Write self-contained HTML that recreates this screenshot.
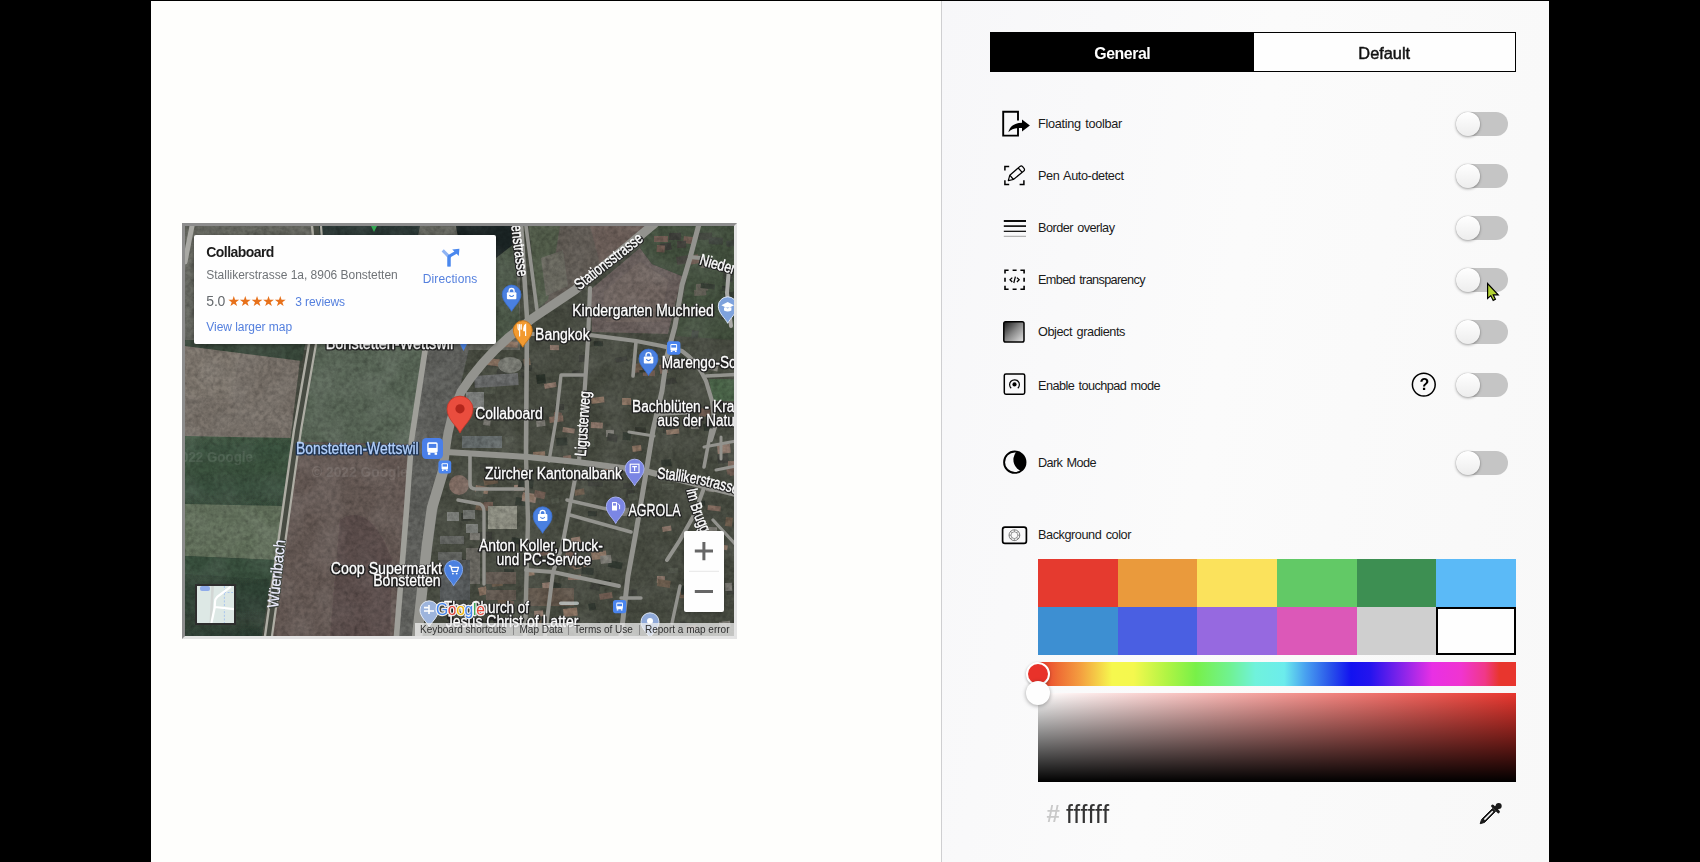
<!DOCTYPE html>
<html lang="en">
<head>
<meta charset="utf-8">
<title>Collaboard settings</title>
<style>
*{box-sizing:border-box;margin:0;padding:0}
html,body{width:1700px;height:862px;overflow:hidden;background:#000;font-family:"Liberation Sans",sans-serif;}
#stage{position:absolute;left:0;top:0;width:1700px;height:862px;background:#000;overflow:hidden}
#canvas{position:absolute;left:151px;top:1px;width:790px;height:861px;background:#fefefc}
#divider{position:absolute;left:941px;top:1px;width:1px;height:861px;background:#cfcfd1}
#panel{position:absolute;left:942px;top:1px;width:607px;height:861px;background:linear-gradient(100deg,#f7f7f9 0%,#fbfbfb 45%,#f8f8f8 100%)}
.abs{position:absolute}
/* tabs */
#tabG{left:990px;top:32px;width:264px;height:40px;background:#000;color:#fff}
#tabD{left:1253px;top:32px;width:263px;height:40px;background:#fefefe;border:1px solid #000;color:#111}
.tab{position:absolute;font-size:17.2px;font-weight:bold;text-align:center;line-height:42px;letter-spacing:-0.5px}
.tab span{display:inline-block;transform:scaleX(.925);transform-origin:50% 50%}
#tabD.tab{line-height:40px;letter-spacing:0;font-weight:normal;-webkit-text-stroke:0.5px #151515}
#tabD.tab span{transform:scaleX(.95)}
/* rows */
.lbl{position:absolute;left:1038px;font-size:12.7px;color:#1a1a1a;white-space:nowrap;word-spacing:1.3px;line-height:16px;height:16px}
.tg{position:absolute;left:1456px;width:52px;height:24px;border-radius:12px;background:#c5c5c5}
.tg i{position:absolute;left:0;top:0;width:24px;height:24px;border-radius:50%;background:linear-gradient(180deg,#ffffff,#ededed);box-shadow:0 1px 3px rgba(0,0,0,.35),0 0 1px rgba(0,0,0,.25)}
.ic{position:absolute;overflow:visible}
.mt{white-space:nowrap}
/* swatches */
.sw{position:absolute;height:48px}
</style>
</head>
<body>
<div id="stage">
<div id="canvas"></div>
<div id="divider"></div>
<div id="panel"></div>

<!-- MAP-START -->
<div id="mapframe" class="abs" style="left:182px;top:223px;width:555px;height:416px;border:3px solid;border-color:#8d8d8d #e4e4e4 #e4e4e4 #8d8d8d;background:#484e43;overflow:hidden">
<svg class="abs" style="left:0;top:0" width="549" height="410" viewBox="185 226 549 410" font-family="Liberation Sans, sans-serif">
<defs>
<filter id="nz" x="0" y="0" width="100%" height="100%"><feTurbulence type="fractalNoise" baseFrequency="0.22" numOctaves="3" seed="4" result="t"/><feColorMatrix type="matrix" values="0 0 0 0 0  0 0 0 0 0  0 0 0 0 0  0.9 0.9 0 0 -0.62"/></filter>
<filter id="nz2" x="0" y="0" width="100%" height="100%"><feTurbulence type="fractalNoise" baseFrequency="0.035" numOctaves="2" seed="11"/><feColorMatrix type="matrix" values="0 0 0 0 1  0 0 0 0 1  0 0 0 0 1  0.8 0.6 0 0 -0.55"/></filter>
<filter id="bl"><feGaussianBlur stdDeviation="0.7"/></filter>

<filter id="bl2"><feGaussianBlur stdDeviation="2.2"/></filter>
<linearGradient id="gf" x1="0" y1="0" x2="0" y2="1"><stop offset="0" stop-color="#3f5843"/><stop offset="1" stop-color="#2f4135"/></linearGradient>
<clipPath id="mc"><rect x="185" y="226" width="549" height="410"/></clipPath>
</defs>
<g clip-path="url(#mc)">
<g filter="url(#bl)">
<rect x="185" y="226" width="549" height="410" fill="#484e43"/>
<path d="M185 226H520V350H185Z" fill="#686a62"/>
<path d="M316 226H420L418 236H314Z" fill="#2c3934"/>
<path d="M185 346L300 360L290 442L185 438Z" fill="#7d756d"/>
<path d="M185 346L240 352L232 400L185 396Z" fill="#877f76" opacity=".7"/>
<path d="M185 340H306L302 361L185 346Z" fill="#3b4c3d"/>
<path d="M185 436L292 438L262 636H185Z" fill="url(#gf)"/>
<path d="M185 504L283 506L275 560L185 556Z" fill="#66755f"/>
<path d="M185 556L275 560L272 580L185 574Z" fill="#3b5240"/>
<path d="M312 344L424 344L412 444L298 442Z" fill="#5c6a5a"/>
<path d="M298 442L412 444L394 636L270 636Z" fill="#6b5d59"/>
<path d="M340 520Q370 500 392 560L390 636H330Z" fill="#5f4f4e" opacity=".8"/>
<path d="M300 444L412 446L411 452L299 450Z" fill="#56634f"/>
<path d="M424 344L470 344L448 440L436 520L420 636L394 636L412 444Z" fill="#62635e"/>
<path d="M456 226H512L514 244Q508 262 496 258Q482 262 470 250Q458 246 456 226Z" fill="#1f2725"/>
<path d="M496 258L514 244L520 320L498 344H496Z" fill="#4e5a4a"/>
<path d="M538 226H648L574 286L545 306Z" fill="#655f58"/>
<path d="M590 226H648L600 264Z" fill="#6f625c"/>
<path d="M529 226H560L548 300L538 308Z" fill="#55604e"/>
<path d="M541 258L563 250L568 286L546 296Z" fill="#6e6d64"/>
<path d="M590 290L640 248L652 264L682 276L668 334L592 332Z" fill="#6d625e"/>
<path d="M604 292L640 262L668 280L660 322L606 322Z" fill="#766a65"/>
<path d="M652 226H700L682 276L652 264L640 248Z" fill="#445241"/>
<path d="M700 226H734V340L676 336L690 262Z" fill="#455340"/>
<path d="M709 379H736V401H713Z" fill="#4c6648"/>
</g>
<g filter="url(#bl)" opacity=".85">
<rect x="544" y="384" width="12" height="5" fill="#a08476" transform="rotate(-10 544 384)"/>
<rect x="615" y="604" width="9" height="5" fill="#2f352e" transform="rotate(-10 615 604)"/>
<rect x="480" y="463" width="14" height="5" fill="#3a3e37" transform="rotate(3 480 463)"/>
<rect x="615" y="358" width="12" height="5" fill="#3a3e37" transform="rotate(-11 615 358)"/>
<rect x="691" y="424" width="8" height="5" fill="#8d8a84" transform="rotate(1 691 424)"/>
<rect x="643" y="370" width="12" height="6" fill="#7c6458" transform="rotate(1 643 370)"/>
<rect x="512" y="537" width="10" height="6" fill="#2c322b" transform="rotate(10 512 537)"/>
<rect x="554" y="412" width="8" height="8" fill="#7c6458" transform="rotate(2 554 412)"/>
<rect x="599" y="594" width="13" height="6" fill="#7c6458" transform="rotate(-9 599 594)"/>
<rect x="570" y="560" width="8" height="7" fill="#8f7265" transform="rotate(11 570 560)"/>
<rect x="476" y="502" width="13" height="8" fill="#74604f" transform="rotate(5 476 502)"/>
<rect x="618" y="508" width="11" height="8" fill="#8d8a84" transform="rotate(-1 618 508)"/>
<rect x="638" y="358" width="13" height="8" fill="#555a50" transform="rotate(8 638 358)"/>
<rect x="533" y="452" width="12" height="5" fill="#9a7b6b" transform="rotate(-3 533 452)"/>
<rect x="623" y="483" width="9" height="6" fill="#3a3e37" transform="rotate(-2 623 483)"/>
<rect x="707" y="484" width="8" height="7" fill="#8d8a84" transform="rotate(9 707 484)"/>
<rect x="680" y="591" width="9" height="7" fill="#74604f" transform="rotate(4 680 591)"/>
<rect x="560" y="407" width="8" height="6" fill="#555a50" transform="rotate(-6 560 407)"/>
<rect x="588" y="511" width="9" height="5" fill="#2f352e" transform="rotate(1 588 511)"/>
<rect x="623" y="432" width="8" height="8" fill="#2c322b" transform="rotate(4 623 432)"/>
<rect x="658" y="472" width="14" height="9" fill="#555a50" transform="rotate(7 658 472)"/>
<rect x="563" y="456" width="8" height="8" fill="#8f7265" transform="rotate(-7 563 456)"/>
<rect x="726" y="468" width="8" height="7" fill="#7c6458" transform="rotate(-12 726 468)"/>
<rect x="497" y="369" width="10" height="5" fill="#3a3e37" transform="rotate(3 497 369)"/>
<rect x="496" y="413" width="10" height="6" fill="#7c6458" transform="rotate(-9 496 413)"/>
<rect x="589" y="624" width="11" height="6" fill="#31362f" transform="rotate(-10 589 624)"/>
<rect x="549" y="417" width="14" height="6" fill="#8f7265" transform="rotate(-7 549 417)"/>
<rect x="717" y="445" width="13" height="9" fill="#a08476" transform="rotate(-5 717 445)"/>
<rect x="632" y="366" width="14" height="7" fill="#31362f" transform="rotate(-3 632 366)"/>
<rect x="516" y="497" width="11" height="8" fill="#2c322b" transform="rotate(7 516 497)"/>
<rect x="726" y="587" width="13" height="8" fill="#3a3e37" transform="rotate(-7 726 587)"/>
<rect x="591" y="552" width="15" height="8" fill="#9a7b6b" transform="rotate(-6 591 552)"/>
<rect x="645" y="617" width="11" height="9" fill="#74604f" transform="rotate(11 645 617)"/>
<rect x="555" y="404" width="9" height="6" fill="#3a3e37" transform="rotate(-0 555 404)"/>
<rect x="726" y="517" width="7" height="9" fill="#74604f" transform="rotate(7 726 517)"/>
<rect x="478" y="532" width="14" height="8" fill="#3a3e37" transform="rotate(-1 478 532)"/>
<rect x="504" y="569" width="10" height="8" fill="#2f352e" transform="rotate(-1 504 569)"/>
<rect x="659" y="365" width="8" height="9" fill="#8f7265" transform="rotate(-8 659 365)"/>
<rect x="704" y="574" width="8" height="8" fill="#9a7b6b" transform="rotate(4 704 574)"/>
<rect x="551" y="499" width="8" height="5" fill="#555a50" transform="rotate(-10 551 499)"/>
<rect x="661" y="380" width="15" height="6" fill="#3a3e37" transform="rotate(-11 661 380)"/>
<rect x="514" y="485" width="13" height="6" fill="#a08476" transform="rotate(-2 514 485)"/>
<rect x="491" y="604" width="10" height="7" fill="#2c322b" transform="rotate(8 491 604)"/>
<rect x="597" y="580" width="14" height="6" fill="#31362f" transform="rotate(1 597 580)"/>
<rect x="505" y="341" width="13" height="6" fill="#9a7b6b" transform="rotate(3 505 341)"/>
<rect x="488" y="358" width="12" height="7" fill="#9a7b6b" transform="rotate(7 488 358)"/>
<rect x="484" y="502" width="9" height="6" fill="#7c6458" transform="rotate(0 484 502)"/>
<rect x="609" y="560" width="14" height="7" fill="#2c322b" transform="rotate(11 609 560)"/>
<rect x="622" y="398" width="9" height="7" fill="#9a7b6b" transform="rotate(0 622 398)"/>
<rect x="523" y="492" width="14" height="9" fill="#a08476" transform="rotate(9 523 492)"/>
<rect x="511" y="470" width="10" height="7" fill="#74604f" transform="rotate(-10 511 470)"/>
<rect x="521" y="361" width="12" height="8" fill="#31362f" transform="rotate(11 521 361)"/>
<rect x="632" y="446" width="9" height="6" fill="#9a7b6b" transform="rotate(-7 632 446)"/>
<rect x="717" y="455" width="11" height="9" fill="#3a3e37" transform="rotate(-8 717 455)"/>
<rect x="574" y="490" width="10" height="6" fill="#74604f" transform="rotate(-10 574 490)"/>
<rect x="556" y="438" width="11" height="8" fill="#2f352e" transform="rotate(-4 556 438)"/>
<rect x="627" y="489" width="8" height="9" fill="#3a3e37" transform="rotate(11 627 489)"/>
<rect x="484" y="417" width="7" height="8" fill="#8d8a84" transform="rotate(6 484 417)"/>
<rect x="680" y="586" width="12" height="9" fill="#2f352e" transform="rotate(-8 680 586)"/>
<rect x="708" y="505" width="13" height="5" fill="#8f7265" transform="rotate(7 708 505)"/>
<rect x="505" y="600" width="9" height="5" fill="#7c6458" transform="rotate(7 505 600)"/>
<rect x="478" y="588" width="8" height="8" fill="#9a7b6b" transform="rotate(-12 478 588)"/>
<rect x="728" y="461" width="14" height="7" fill="#8f7265" transform="rotate(1 728 461)"/>
<rect x="521" y="372" width="8" height="5" fill="#3a3e37" transform="rotate(10 521 372)"/>
<rect x="628" y="494" width="9" height="7" fill="#555a50" transform="rotate(-8 628 494)"/>
<rect x="550" y="345" width="9" height="5" fill="#a08476" transform="rotate(1 550 345)"/>
<rect x="507" y="478" width="14" height="5" fill="#555a50" transform="rotate(-2 507 478)"/>
<rect x="591" y="582" width="10" height="7" fill="#3a3e37" transform="rotate(12 591 582)"/>
<rect x="549" y="581" width="13" height="8" fill="#2f352e" transform="rotate(12 549 581)"/>
<rect x="725" y="583" width="7" height="8" fill="#8d8a84" transform="rotate(-2 725 583)"/>
<rect x="470" y="533" width="10" height="7" fill="#8d8a84" transform="rotate(2 470 533)"/>
<rect x="645" y="353" width="8" height="6" fill="#8f7265" transform="rotate(-6 645 353)"/>
<rect x="719" y="622" width="11" height="6" fill="#8d8a84" transform="rotate(-7 719 622)"/>
<rect x="505" y="437" width="8" height="6" fill="#555a50" transform="rotate(-7 505 437)"/>
<rect x="594" y="341" width="9" height="5" fill="#2f352e" transform="rotate(2 594 341)"/>
<rect x="563" y="427" width="12" height="5" fill="#a08476" transform="rotate(8 563 427)"/>
<rect x="498" y="599" width="13" height="7" fill="#74604f" transform="rotate(5 498 599)"/>
<rect x="591" y="422" width="12" height="6" fill="#a08476" transform="rotate(3 591 422)"/>
<rect x="657" y="576" width="8" height="7" fill="#a08476" transform="rotate(2 657 576)"/>
<rect x="679" y="345" width="12" height="8" fill="#555a50" transform="rotate(11 679 345)"/>
<rect x="632" y="365" width="7" height="8" fill="#7c6458" transform="rotate(-3 632 365)"/>
<rect x="579" y="355" width="7" height="7" fill="#3a3e37" transform="rotate(-0 579 355)"/>
<rect x="456" y="571" width="13" height="7" fill="#a08476" transform="rotate(-10 456 571)"/>
<rect x="600" y="556" width="11" height="8" fill="#8d8a84" transform="rotate(-6 600 556)"/>
<rect x="663" y="407" width="12" height="7" fill="#2f352e" transform="rotate(-10 663 407)"/>
<rect x="705" y="423" width="7" height="8" fill="#3a3e37" transform="rotate(-10 705 423)"/>
<rect x="496" y="414" width="13" height="6" fill="#2c322b" transform="rotate(-9 496 414)"/>
<rect x="588" y="481" width="15" height="5" fill="#3a3e37" transform="rotate(4 588 481)"/>
<rect x="535" y="490" width="11" height="7" fill="#7c6458" transform="rotate(12 535 490)"/>
<rect x="606" y="430" width="8" height="7" fill="#8d8a84" transform="rotate(-1 606 430)"/>
<rect x="680" y="621" width="11" height="6" fill="#3a3e37" transform="rotate(10 680 621)"/>
<rect x="711" y="362" width="8" height="8" fill="#8d8a84" transform="rotate(11 711 362)"/>
<rect x="491" y="578" width="11" height="9" fill="#74604f" transform="rotate(-6 491 578)"/>
<rect x="702" y="481" width="7" height="5" fill="#9a7b6b" transform="rotate(4 702 481)"/>
<rect x="566" y="551" width="10" height="7" fill="#7c6458" transform="rotate(8 566 551)"/>
<rect x="455" y="558" width="14" height="5" fill="#3a3e37" transform="rotate(5 455 558)"/>
<rect x="703" y="424" width="10" height="7" fill="#2c322b" transform="rotate(-10 703 424)"/>
<rect x="709" y="559" width="14" height="6" fill="#8f7265" transform="rotate(8 709 559)"/>
<rect x="534" y="611" width="9" height="6" fill="#a08476" transform="rotate(-4 534 611)"/>
<rect x="668" y="568" width="10" height="5" fill="#555a50" transform="rotate(-2 668 568)"/>
<rect x="696" y="501" width="9" height="5" fill="#2f352e" transform="rotate(-1 696 501)"/>
<rect x="662" y="527" width="9" height="5" fill="#a08476" transform="rotate(-9 662 527)"/>
<rect x="585" y="440" width="9" height="8" fill="#555a50" transform="rotate(-6 585 440)"/>
<rect x="635" y="427" width="11" height="7" fill="#31362f" transform="rotate(3 635 427)"/>
<rect x="476" y="485" width="13" height="7" fill="#9a7b6b" transform="rotate(10 476 485)"/>
<rect x="729" y="470" width="8" height="6" fill="#7c6458" transform="rotate(-8 729 470)"/>
<rect x="608" y="433" width="10" height="8" fill="#3a3e37" transform="rotate(9 608 433)"/>
<rect x="661" y="460" width="10" height="7" fill="#2f352e" transform="rotate(-6 661 460)"/>
<rect x="662" y="484" width="12" height="6" fill="#555a50" transform="rotate(0 662 484)"/>
<rect x="628" y="590" width="9" height="6" fill="#3a3e37" transform="rotate(-3 628 590)"/>
<rect x="633" y="465" width="9" height="8" fill="#8f7265" transform="rotate(-9 633 465)"/>
<rect x="572" y="561" width="13" height="9" fill="#9a7b6b" transform="rotate(-12 572 561)"/>
<rect x="563" y="609" width="14" height="8" fill="#9a7b6b" transform="rotate(-6 563 609)"/>
<rect x="485" y="385" width="11" height="8" fill="#555a50" transform="rotate(8 485 385)"/>
<rect x="701" y="365" width="13" height="5" fill="#31362f" transform="rotate(-6 701 365)"/>
<rect x="708" y="527" width="9" height="6" fill="#8d8a84" transform="rotate(1 708 527)"/>
<rect x="575" y="562" width="8" height="6" fill="#2c322b" transform="rotate(-7 575 562)"/>
<rect x="527" y="569" width="7" height="7" fill="#9a7b6b" transform="rotate(-5 527 569)"/>
<rect x="542" y="583" width="9" height="7" fill="#a08476" transform="rotate(-6 542 583)"/>
<rect x="719" y="544" width="9" height="5" fill="#9a7b6b" transform="rotate(9 719 544)"/>
<rect x="633" y="364" width="9" height="7" fill="#74604f" transform="rotate(-7 633 364)"/>
<rect x="571" y="538" width="9" height="8" fill="#a08476" transform="rotate(-10 571 538)"/>
<rect x="591" y="398" width="13" height="6" fill="#9a7b6b" transform="rotate(-7 591 398)"/>
<rect x="664" y="426" width="15" height="7" fill="#31362f" transform="rotate(10 664 426)"/>
<rect x="588" y="604" width="7" height="7" fill="#2f352e" transform="rotate(-11 588 604)"/>
<rect x="461" y="513" width="10" height="8" fill="#31362f" transform="rotate(-3 461 513)"/>
<rect x="702" y="596" width="13" height="9" fill="#31362f" transform="rotate(-4 702 596)"/>
<rect x="506" y="611" width="13" height="5" fill="#555a50" transform="rotate(5 506 611)"/>
<rect x="686" y="626" width="11" height="5" fill="#7c6458" transform="rotate(-5 686 626)"/>
<rect x="552" y="617" width="8" height="9" fill="#3a3e37" transform="rotate(-3 552 617)"/>
<rect x="666" y="430" width="13" height="5" fill="#9a7b6b" transform="rotate(-7 666 430)"/>
<rect x="604" y="469" width="10" height="8" fill="#9a7b6b" transform="rotate(-11 604 469)"/>
<rect x="568" y="575" width="13" height="5" fill="#8f7265" transform="rotate(-1 568 575)"/>
<rect x="676" y="358" width="9" height="5" fill="#2c322b" transform="rotate(-4 676 358)"/>
<rect x="530" y="618" width="12" height="6" fill="#74604f" transform="rotate(10 530 618)"/>
<rect x="537" y="549" width="12" height="8" fill="#7c6458" transform="rotate(-11 537 549)"/>
<rect x="519" y="478" width="15" height="9" fill="#2f352e" transform="rotate(7 519 478)"/>
<rect x="706" y="576" width="8" height="7" fill="#8f7265" transform="rotate(7 706 576)"/>
<rect x="658" y="579" width="13" height="7" fill="#74604f" transform="rotate(9 658 579)"/>
<rect x="582" y="567" width="12" height="7" fill="#2f352e" transform="rotate(6 582 567)"/>
<rect x="523" y="359" width="7" height="7" fill="#74604f" transform="rotate(-8 523 359)"/>
<rect x="572" y="371" width="8" height="7" fill="#3a3e37" transform="rotate(-10 572 371)"/>
<rect x="592" y="546" width="11" height="6" fill="#2f352e" transform="rotate(-1 592 546)"/>
<rect x="700" y="408" width="11" height="8" fill="#7c6458" transform="rotate(7 700 408)"/>
<rect x="536" y="421" width="9" height="6" fill="#8d8a84" transform="rotate(-7 536 421)"/>
<rect x="523" y="411" width="8" height="9" fill="#2c322b" transform="rotate(-7 523 411)"/>
<rect x="523" y="493" width="12" height="5" fill="#9a7b6b" transform="rotate(12 523 493)"/>
<rect x="483" y="478" width="14" height="8" fill="#74604f" transform="rotate(-11 483 478)"/>
<rect x="536" y="375" width="9" height="9" fill="#2c322b" transform="rotate(-7 536 375)"/>
<rect x="476" y="489" width="8" height="7" fill="#555a50" transform="rotate(11 476 489)"/>
<rect x="694" y="290" width="12" height="6" fill="#6f6a60" transform="rotate(-4 694 290)"/>
<rect x="692" y="330" width="7" height="8" fill="#43463f" transform="rotate(8 692 330)"/>
<rect x="723" y="272" width="10" height="7" fill="#3c4038" transform="rotate(-7 723 272)"/>
<rect x="722" y="286" width="8" height="5" fill="#353a33" transform="rotate(4 722 286)"/>
<rect x="696" y="284" width="12" height="7" fill="#6f6a60" transform="rotate(-2 696 284)"/>
<rect x="701" y="262" width="15" height="6" fill="#6f6a60" transform="rotate(-2 701 262)"/>
<rect x="691" y="307" width="13" height="8" fill="#353a33" transform="rotate(5 691 307)"/>
<rect x="698" y="233" width="14" height="7" fill="#3c4038" transform="rotate(-2 698 233)"/>
<rect x="725" y="277" width="8" height="5" fill="#43463f" transform="rotate(3 725 277)"/>
<rect x="726" y="241" width="12" height="6" fill="#43463f" transform="rotate(-8 726 241)"/>
<rect x="701" y="283" width="14" height="5" fill="#353a33" transform="rotate(6 701 283)"/>
<rect x="722" y="311" width="9" height="8" fill="#3c4038" transform="rotate(11 722 311)"/>
<rect x="709" y="237" width="14" height="7" fill="#43463f" transform="rotate(3 709 237)"/>
<rect x="724" y="293" width="12" height="6" fill="#353a33" transform="rotate(-8 724 293)"/>
<rect x="660" y="244" width="11" height="7" fill="#3c3a38" transform="rotate(-8 660 244)"/>
<rect x="689" y="256" width="9" height="9" fill="#7a5f55" transform="rotate(-11 689 256)"/>
<rect x="684" y="236" width="12" height="7" fill="#7a5f55" transform="rotate(7 684 236)"/>
<rect x="677" y="241" width="9" height="7" fill="#4a4440" transform="rotate(-1 677 241)"/>
<rect x="669" y="233" width="12" height="7" fill="#3c3a38" transform="rotate(-1 669 233)"/>
<rect x="676" y="257" width="14" height="8" fill="#4a4440" transform="rotate(-9 676 257)"/>
<rect x="657" y="245" width="8" height="7" fill="#7a5f55" transform="rotate(4 657 245)"/>
<rect x="654" y="236" width="14" height="6" fill="#7a5f55" transform="rotate(0 654 236)"/>
<rect x="474" y="376" width="44" height="12" fill="#77787a" transform="rotate(-4 474 376)"/>
<rect x="466" y="392" width="18" height="16" fill="#8b8d8c"/>
<rect x="462" y="436" width="40" height="12" fill="#6e7478"/>
<rect x="488" y="506" width="29" height="23" fill="#a3a396"/>
<ellipse cx="459" cy="485" rx="10" ry="10" fill="#8f756c"/>
<rect x="447" y="512" width="12" height="9" fill="#8b8d8a"/><rect x="463" y="510" width="12" height="9" fill="#7f817e"/><rect x="466" y="524" width="12" height="9" fill="#8b8d8a"/>
<rect x="440" y="536" width="24" height="8" fill="#6e706d"/><rect x="438" y="552" width="24" height="8" fill="#6e706d"/><rect x="466" y="548" width="14" height="36" fill="#77736d"/>
<rect x="486" y="572" width="30" height="12" fill="#6d6159"/><rect x="486" y="590" width="30" height="10" fill="#6d6159"/>
<rect x="440" y="560" width="30" height="40" fill="#5b5f63"/>
<rect x="524" y="588" width="50" height="18" fill="#6a5a50"/>
<ellipse cx="510" cy="365" rx="12" ry="8" fill="#8a8b84"/>
</g>
<rect x="185" y="226" width="549" height="410" filter="url(#nz)" opacity=".32"/>
<rect x="185" y="226" width="549" height="410" filter="url(#nz2)" opacity=".16"/>
<g fill="none" stroke="#93938e" stroke-linecap="round" stroke-linejoin="round" filter="url(#bl)">
<path d="M316 226L323 300L312.5 344L297.5 430L268.5 636" stroke="#464c42" stroke-width="6"/>
<path d="M312 226L319.5 300L309 344L294 430L265 636" stroke="#aeada4" stroke-width="2.4"/>
<path d="M321 226L326.5 300L316 344L301 430L272 636" stroke="#aeada4" stroke-width="2.2"/>
<path d="M192 226L185 262" stroke="#a9a9a4" stroke-width="5"/>
<path d="M426 344L411.5 440L406.5 510L396.5 636" stroke="#9f9f99" stroke-width="5.6"/>
<path d="M654 224L575 290L533 318L509 337Q480 362 461 392Q449 420 446 446L443 470" stroke-width="9"/>
<path d="M444 468L432 508L427 545L417 638" stroke-width="10.5" stroke="#969691"/>
<path d="M521 224L527 318L526 457" stroke-width="4.6"/>
<path d="M526 226L537 310" stroke-width="3.6"/>
<path d="M526 457L528 520L525 636" stroke-width="4.4" stroke="#8e8e88"/>
<path d="M446 452L528 457L577 462L645 471L704 486L736 494" stroke-width="6"/>
<path d="M590 288L588 340L584 400L579 461" stroke-width="4.2"/>
<path d="M699 224L690 258L682 285L675 326L667 356L662 391L653 430L645 479L636 532L628 576L621 636" stroke-width="5"/>
<path d="M528 334L590 335L636 341L662 346L682 351Q697 361 706 381L712 401L715 427L711 440" stroke-width="4.2"/>
<path d="M706 376L736 374.5" stroke-width="3.6"/>
<path d="M657 414.5L688 413" stroke-width="3.2"/>
<path d="M629 432L654 436" stroke-width="3.2"/>
<path d="M636 342L633 376" stroke-width="3.6"/>
<path d="M690 257L700 258" stroke-width="4"/>
<path d="M729 268L727 293L731 326" stroke-width="4" stroke="#a9a9a6"/>
<path d="M585 375L561 375L556 420L549 461" stroke-width="3.4"/>
<path d="M567 500L611 510" stroke-width="3.6"/>
<path d="M570 515L631 532" stroke-width="3.6"/>
<path d="M575 479L562 547L553 572L545 636" stroke-width="4"/>
<path d="M526 570L553 572L619 586" stroke-width="4"/>
<path d="M621 598L641 598" stroke-width="3.4"/>
<path d="M470 454L470 484Q470 489 476 489L523 489" stroke-width="3.6"/>
<path d="M458 500L480 504Q484 506 484 512L484 584" stroke-width="3.4"/>
<path d="M704 488L694 515L680 540L667 560" stroke-width="4"/>
<path d="M680 586L672 623" stroke-width="3.4"/>
<path d="M711 430L704 467" stroke-width="3.6"/>
<path d="M721 437L721 459" stroke-width="3"/>
<path d="M704 447L736 441" stroke-width="3"/>
<path d="M716 470L736 466" stroke-width="3"/>
<path d="M713 520L736 545" stroke-width="3.2"/>
</g>
</g>
<g clip-path="url(#mc)">
<path d="M370 224L378 224L374 232Z" fill="#34a853"/>
<path d="M460 344L467 344L463.5 351Z" fill="#4a80e0"/>
<g fill="#222" stroke="#222" stroke-width="3.2" stroke-linejoin="round" font-size="14">
<text id="th" x="325.7" y="348.9" textLength="127.5" lengthAdjust="spacingAndGlyphs">Bonstetten-Wettswil</text>
</g><g fill="#fff" stroke="#fff" stroke-width=".3"><use href="#th"/></g>
<path d="M511.6 311.3C509.3 306.5 502.3 301.4 502.3 294.4A9.3 9.3 0 1 1 520.9 294.4C520.9 301.4 513.9 306.5 511.6 311.3Z" fill="#4a80e0" stroke="#3a6fd0" stroke-width="0.8"/>
<rect x="506.9" y="292.3" width="9.5" height="7.0" rx="1" fill="#fff"/><path d="M509.1 292.3V291.0A2.5 2.5 0 0 1 514.1 291.0V292.3" fill="none" stroke="#fff" stroke-width="1.3"/><path d="M509.4 295.1Q511.6 298.0 513.8 295.1" fill="none" stroke="#4a80e0" stroke-width="1.1"/>
<path d="M522.8 347.2C520.4 342.3 513.4 337.2 513.4 330.1A9.4 9.4 0 1 1 532.2 330.1C532.2 337.2 525.1 342.3 522.8 347.2Z" fill="#f29a30" stroke="#c9781a" stroke-width="1"/>
<path d="M519.6 324.6V329.2M521.2 324.6V329.2M518 324.6V328.2Q518 330 519.6 330.2V336M525.6 324.6Q523.6 326 523.8 330.6H525.6V336Z" stroke="#fff" stroke-width="1.2" fill="#fff" stroke-linecap="round"/>
<path d="M648.5 375.6C646.1 370.7 639.1 365.6 639.1 358.5A9.4 9.4 0 1 1 657.9 358.5C657.9 365.6 650.9 370.7 648.5 375.6Z" fill="#4a80e0" stroke="#3a6fd0" stroke-width="0.8"/>
<rect x="643.8" y="356.4" width="9.5" height="7.0" rx="1" fill="#fff"/><path d="M646.0 356.4V355.1A2.5 2.5 0 0 1 651.0 355.1V356.4" fill="none" stroke="#fff" stroke-width="1.3"/><path d="M646.3 359.2Q648.5 362.1 650.7 359.2" fill="none" stroke="#4a80e0" stroke-width="1.1"/>
<path d="M727.7 323.3C725.4 318.4 718.3 313.2 718.3 306.2A9.4 9.4 0 1 1 737.1 306.2C737.1 313.2 730.1 318.4 727.7 323.3Z" fill="#7ea2dc" stroke="#dfe8f6" stroke-width="1"/>
<path d="M721.4 305.2L727.7 302L734 305.2L727.7 308.4ZM724 307.6V310.4Q727.7 312.6 731.4 310.4V307.6" fill="#fff"/>
<path d="M634.6 485.7C632.2 480.8 625.2 475.7 625.2 468.6A9.4 9.4 0 1 1 644.0 468.6C644.0 475.7 637.0 480.8 634.6 485.7Z" fill="#7b86e4" stroke="#a9b1f0" stroke-width="1"/>
<rect x="630.2" y="464.2" width="8.8" height="8.4" fill="none" stroke="#fff" stroke-width="1.1"/><path d="M632.2 466.6H637M634.6 466.6V471" stroke="#fff" stroke-width="1.1" fill="none"/>
<path d="M615.7 523.5C613.4 518.6 606.3 513.4 606.3 506.4A9.4 9.4 0 1 1 625.1 506.4C625.1 513.4 618.1 518.6 615.7 523.5Z" fill="#7b86e4" stroke="#a9b1f0" stroke-width="1"/>
<rect x="612" y="502" width="5" height="8.6" rx=".6" fill="#fff"/><rect x="613" y="503.2" width="3" height="2.4" fill="#7b86e4"/><path d="M617.6 503.6L619.6 505V509.2" stroke="#fff" stroke-width="1" fill="none"/>
<path d="M542.6 533.3C540.2 528.4 533.2 523.2 533.2 516.2A9.4 9.4 0 1 1 552.0 516.2C552.0 523.2 545.0 528.4 542.6 533.3Z" fill="#4a80e0" stroke="#3a6fd0" stroke-width="0.8"/>
<rect x="537.9" y="514.1" width="9.5" height="7.0" rx="1" fill="#fff"/><path d="M540.1 514.1V512.8A2.5 2.5 0 0 1 545.1 512.8V514.1" fill="none" stroke="#fff" stroke-width="1.3"/><path d="M540.4 517.0Q542.6 519.8 544.8 517.0" fill="none" stroke="#4a80e0" stroke-width="1.1"/>
<path d="M453.6 585.8C451.4 581.1 444.6 576.1 444.6 569.4A9 9 0 1 1 462.6 569.4C462.6 576.1 455.9 581.1 453.6 585.8Z" fill="#4a80e0" stroke="#7fa6ee" stroke-width="1"/>
<path d="M448.9 565.8H450.7L452.3 571.4H457.3L458.5 567.4H451.3" fill="none" stroke="#fff" stroke-width="1.3" stroke-linejoin="round"/><circle cx="452.9" cy="573.6" r=".9" fill="#fff"/><circle cx="456.7" cy="573.6" r=".9" fill="#fff"/>
<path d="M429.2 626.7C426.9 622.0 420.0 616.9 420.0 610.0A9.2 9.2 0 1 1 438.4 610.0C438.4 616.9 431.5 622.0 429.2 626.7Z" fill="#9db4dc" stroke="#e4ebf7" stroke-width="1"/>
<path d="M424 611H434M424 607.6H429V614M429 607.6V605" stroke="#fff" stroke-width="1.6" fill="none"/>
<path d="M650.0 638.2C647.8 633.5 641.0 628.5 641.0 621.8A9 9 0 1 1 659.0 621.8C659.0 628.5 652.2 633.5 650.0 638.2Z" fill="#8fa9d8" stroke="#dfe8f6" stroke-width="1"/>
<circle cx="650" cy="621" r="3" fill="#fff"/>
<rect x="667" y="341.3" width="13.4" height="13.4" rx="2.7" fill="#4a84ee"/><rect x="670.4" y="344.0" width="6.7" height="6.7" rx="1.1" fill="#fff"/><rect x="671.3" y="345.1" width="4.8" height="2.5" fill="#4a84ee"/><rect x="670.8" y="350.7" width="1.6" height="1.3" fill="#fff"/><rect x="675.0" y="350.7" width="1.6" height="1.3" fill="#fff"/>
<rect x="422" y="438" width="21" height="21" rx="4.2" fill="#4a7fe8"/><rect x="427.2" y="442.2" width="10.5" height="10.5" rx="1.7" fill="#fff"/><rect x="428.7" y="443.9" width="7.6" height="4.0" fill="#4a7fe8"/><rect x="427.9" y="452.7" width="2.5" height="2.1" fill="#fff"/><rect x="434.6" y="452.7" width="2.5" height="2.1" fill="#fff"/>
<rect x="438.4" y="460.6" width="12.8" height="12.8" rx="2.6" fill="#4a84ee"/><rect x="441.6" y="463.2" width="6.4" height="6.4" rx="1.0" fill="#fff"/><rect x="442.5" y="464.2" width="4.6" height="2.4" fill="#4a84ee"/><rect x="442.0" y="469.6" width="1.5" height="1.3" fill="#fff"/><rect x="446.1" y="469.6" width="1.5" height="1.3" fill="#fff"/>
<rect x="613" y="600" width="13.2" height="13.2" rx="2.6" fill="#4a84ee"/><rect x="616.3" y="602.6" width="6.6" height="6.6" rx="1.1" fill="#fff"/><rect x="617.2" y="603.7" width="4.8" height="2.5" fill="#4a84ee"/><rect x="616.7" y="609.2" width="1.6" height="1.3" fill="#fff"/><rect x="620.9" y="609.2" width="1.6" height="1.3" fill="#fff"/>
<rect x="559" y="601.4" width="20" height="3.6" rx="1.8" fill="#dfe8ea" opacity=".65" filter="url(#bl)"/>
<path d="M460.0 432.9C456.8 426.0 447.0 418.9 447.0 409.1A13 13 0 1 1 473.0 409.1C473.0 418.9 463.2 426.0 460.0 432.9Z" fill="#ea4d3e" stroke="#c4372b" stroke-width="0.8"/>
<circle cx="460" cy="408.8" r="4.6" fill="#b3261c"/>
<g fill="#222" stroke="#222" stroke-width="3.2" stroke-linejoin="round" font-size="14">
<text id="t1" x="572.3" y="315.8" textLength="141.4" lengthAdjust="spacingAndGlyphs">Kindergarten Muchried</text>
<text id="t2" x="535" y="340.2" textLength="54.7" lengthAdjust="spacingAndGlyphs">Bangkok</text>
<text id="t3" x="661.7" y="368.3" textLength="78" lengthAdjust="spacingAndGlyphs">Marengo-Sol</text>
<text id="t4" x="632" y="411.7" textLength="110" lengthAdjust="spacingAndGlyphs">Bachblüten - Kraft</text>
<text id="t5" x="657.6" y="425.5" textLength="81.5" lengthAdjust="spacingAndGlyphs">aus der Natur</text>
<text id="t6" x="475.3" y="419.3" textLength="67.4" lengthAdjust="spacingAndGlyphs">Collaboard</text>
<text id="t7" x="485" y="479" textLength="136.9" lengthAdjust="spacingAndGlyphs">Zürcher Kantonalbank</text>
<text id="t8" x="628.5" y="516.3" textLength="52.1" lengthAdjust="spacingAndGlyphs">AGROLA</text>
<text id="t9" x="478.9" y="551" textLength="124.1" lengthAdjust="spacingAndGlyphs">Anton Koller, Druck-</text>
<text id="t10" x="496.8" y="564.8" textLength="94.4" lengthAdjust="spacingAndGlyphs">und PC-Service</text>
<text id="t11" x="330.8" y="573.5" textLength="111.2" lengthAdjust="spacingAndGlyphs">Coop Supermarkt</text>
<text id="t12" x="373.2" y="586.3" textLength="67.4" lengthAdjust="spacingAndGlyphs">Bonstetten</text>
<text id="t13" x="444" y="613.3" textLength="85" lengthAdjust="spacingAndGlyphs">The Church of</text>
<text id="t14" x="445.7" y="627" textLength="132.8" lengthAdjust="spacingAndGlyphs">Jesus Christ of Latter</text>
</g>
<g fill="#fff" stroke="#fff" stroke-width="0.3" stroke-linejoin="round"><use href="#t1"/><use href="#t2"/><use href="#t3"/><use href="#t4"/><use href="#t5"/><use href="#t6"/><use href="#t7"/><use href="#t8"/><use href="#t9"/><use href="#t10"/><use href="#t11"/><use href="#t12"/><use href="#t13"/><use href="#t14"/></g>
<g fill="#1e3352" stroke="#1e3352" stroke-width="3" stroke-linejoin="round" font-size="14">
<text id="t15" x="296" y="453.5" textLength="122.6" lengthAdjust="spacingAndGlyphs">Bonstetten-Wettswil</text>
</g>
<g fill="#b3d0fb" stroke="#b3d0fb" stroke-width="0.3" stroke-linejoin="round"><use href="#t15"/></g>
<g fill="#262626" stroke="#262626" stroke-width="2.6" stroke-linejoin="round" font-size="11.2">
<text id="t16" x="579.5" y="290.5" textLength="81.6" lengthAdjust="spacingAndGlyphs" transform="rotate(-37.8 579.5 290.5)">Stationsstrasse</text>
<text id="t17" x="511.2" y="225.6" textLength="51.6" lengthAdjust="spacingAndGlyphs" transform="rotate(83 511.2 225.6)">enstrasse</text>
<text id="t18" x="698.8" y="264.3" textLength="59" lengthAdjust="spacingAndGlyphs" transform="rotate(15.8 698.8 264.3)">Niederweg</text>
<text id="t19" x="585.8" y="456.5" textLength="65" lengthAdjust="spacingAndGlyphs" transform="rotate(-86 585.8 456.5)">Ligusterweg</text>
<path id="pt20" d="M657 478.6C680 480.2 702 484 738 494.5" fill="none" stroke="none"/><text id="t20"><textPath href="#pt20" textLength="82" lengthAdjust="spacingAndGlyphs">Stallikerstrasse</textPath></text>
<path id="pt21" d="M686.4 489.5Q689.5 507 702 535" fill="none" stroke="none"/><text id="t21"><textPath href="#pt21" textLength="47" lengthAdjust="spacingAndGlyphs">Im Brugg</textPath></text>
</g>
<g fill="#fff" stroke="#fff" stroke-width="0.4" stroke-linejoin="round"><use href="#t16"/><use href="#t17"/><use href="#t18"/><use href="#t19"/><use href="#t20"/><use href="#t21"/></g>
<g fill="#39403a" stroke="#39403a" stroke-width="2" stroke-linejoin="round" font-size="11.6">
<text id="t22" x="278" y="608.5" textLength="68.7" lengthAdjust="spacingAndGlyphs" transform="rotate(-83.9 278 608.5)">Wüeribach</text>
</g>
<g fill="#eef" stroke="#eef" stroke-width="0.2" stroke-linejoin="round"><use href="#t22"/></g>
<g fill="#fff" opacity=".09" font-size="14" font-weight="bold">
<text id="t23" x="312" y="477" textLength="96" lengthAdjust="spacingAndGlyphs">© 2022 Google</text>
<text id="t24" x="160" y="462" textLength="93" lengthAdjust="spacingAndGlyphs">© 2022 Google</text>
</g>
<g font-size="15.6" stroke="#f4f4f4" stroke-width="2.4" opacity=".96" stroke-linejoin="round" style="paint-order:stroke" letter-spacing="-0.3">
<text x="436" y="614.5"><tspan fill="#4285f4">G</tspan><tspan fill="#ea4335">o</tspan><tspan fill="#fbbc05">o</tspan><tspan fill="#4285f4">g</tspan><tspan fill="#34a853">l</tspan><tspan fill="#ea4335">e</tspan></text>
</g>
</g>
</svg>
<div class="abs" style="left:9px;top:9px;width:302px;height:109px;background:#fefefe;box-shadow:0 1px 4px rgba(0,0,0,.35);border-radius:2px"></div>
<div class="abs mt" style="left:21.30000000000001px;top:18.400000000000006px;font-size:14px;font-weight:bold;color:#1c1c1c;letter-spacing:-0.56px;line-height:16px">Collaboard</div>
<div class="abs mt" style="left:21.30000000000001px;top:41.89999999999998px;font-size:12px;color:#6f7377;letter-spacing:-0.02px;line-height:14px" id="addr">Stallikerstrasse 1a, 8906 Bonstetten</div>
<div class="abs mt" style="left:21.30000000000001px;top:67px;font-size:14px;color:#666a6e;line-height:16px;letter-spacing:-0.2px" id="rate">5.0</div>
<div class="abs mt" style="left:42.5px;top:66.80000000000001px;font-family:DejaVu Sans,sans-serif;font-size:14px;color:#e7711b;line-height:16px;letter-spacing:-0.95px" id="stars">★★★★★</div>
<div class="abs mt" style="left:110.30000000000001px;top:69px;font-size:12px;color:#5580de;line-height:14px;letter-spacing:-0.11px" id="rev">3 reviews</div>
<div class="abs mt" style="left:21.30000000000001px;top:94.39999999999998px;font-size:12px;color:#5580de;line-height:14px;letter-spacing:-0.05px" id="vlm">View larger map</div>
<div class="abs mt" style="left:237.7px;top:45.80000000000001px;font-size:12px;color:#5580de;line-height:14px;letter-spacing:0.14px" id="dir">Directions</div>
<svg class="abs" style="left:255px;top:21px" width="22" height="22" viewBox="440 247 22 22"><path d="M441.6 251.4L443.8 249.2L450.6 256V266.6H447.4V257.4Z" fill="#8fb4f4"/><path d="M447.4 266.6V257.2Q447.4 256 448.4 255L454.4 251.6L452.2 249.6L459.4 248.8L458.8 256L456.6 253.8L451.4 256.8Q450.6 257.4 450.6 258.4V266.6Z" fill="#4a88ee"/></svg>
<div class="abs" style="left:499px;top:305px;width:40px;height:81px;background:#fefefe;border-radius:2px;box-shadow:0 1px 4px rgba(0,0,0,.3)"></div>
<svg class="abs" style="left:499px;top:305px" width="40" height="81" viewBox="684 531 40 81" fill="none"><path d="M694.8 551.1H713M703.9 542V560.2M694.8 591.6H713" stroke="#666" stroke-width="3"/><path d="M689 571.3H719" stroke="#e6e6e6" stroke-width="1"/></svg>
<div class="abs" style="left:9.599999999999994px;top:357.6px;width:41px;height:41px;background:#dfe9e6;border:2px solid #2e2e2e;overflow:hidden"><svg width="38" height="38" viewBox="0 0 38 38" fill="none" stroke="#fff"><rect x="0" y="0" width="38" height="38" fill="#dde8e5" stroke="none"/><path d="M15.6 0L13.8 38" stroke="#d2d6d4" stroke-width="2.6"/><path d="M27.4 0V38" stroke="#9dbcf0" stroke-width=".8" stroke-dasharray="2 1.6"/><path d="M27 6.5H36" stroke="#9dbcf0" stroke-width=".8" stroke-dasharray="2 1.6"/><path d="M34 0.5L20.5 10.5Q18 13 18 16L17.6 22L14.2 38M18 21L38 23.2" stroke-width="2.2"/><rect x="3" y="0" width="10" height="5" rx="2" fill="#8fabea" stroke="none"/></svg></div>
<div class="abs" style="left:230px;top:396.5px;width:319px;height:13.5px;background:rgba(240,240,240,.74)"></div>
<div class="abs mt bb" style="left:235px;top:397px;font-size:10px;line-height:13px;color:#2f2f2f">Keyboard shortcuts</div>
<div class="abs mt bb" style="left:334.5px;top:397px;font-size:10px;line-height:13px;color:#2f2f2f">Map Data</div>
<div class="abs mt bb" style="left:389px;top:397px;font-size:10px;line-height:13px;color:#2f2f2f">Terms of Use</div>
<div class="abs mt bb" style="left:460px;top:397px;font-size:10px;line-height:13px;color:#2f2f2f">Report a map error</div>
<div class="abs" style="left:327.5px;top:398.5px;width:1px;height:10px;background:#8a8a8a"></div>
<div class="abs" style="left:383px;top:398.5px;width:1px;height:10px;background:#8a8a8a"></div>
<div class="abs" style="left:453.5px;top:398.5px;width:1px;height:10px;background:#8a8a8a"></div>
</div>
<!-- MAP-END -->

<!-- tabs -->
<div id="tabG" class="tab"><span>General</span></div>
<div id="tabD" class="tab"><span>Default</span></div>

<!-- labels -->
<div class="lbl" style="top:116px;letter-spacing:-0.298px">Floating toolbar</div>
<div class="lbl" style="top:168px;letter-spacing:-0.4px">Pen Auto-detect</div>
<div class="lbl" style="top:220px;letter-spacing:-0.524px">Border overlay</div>
<div class="lbl" style="top:272px;letter-spacing:-0.64px">Embed transparency</div>
<div class="lbl" style="top:324px;letter-spacing:-0.419px">Object gradients</div>
<div class="lbl" style="top:378px;letter-spacing:-0.553px">Enable touchpad mode</div>
<div class="lbl" style="top:455px;letter-spacing:-0.607px">Dark Mode</div>
<div class="lbl" style="top:527px;letter-spacing:-0.443px">Background color</div>

<!-- toggles -->
<div class="tg" style="top:112px"><i></i></div>
<div class="tg" style="top:164px"><i></i></div>
<div class="tg" style="top:216px"><i></i></div>
<div class="tg" style="top:268px"><i></i></div>
<div class="tg" style="top:320px"><i></i></div>
<div class="tg" style="top:373.4px"><i></i></div>
<div class="tg" style="top:450.5px"><i></i></div>

<!-- ICONS-START -->
<svg class="abs" style="left:0;top:0" width="1700" height="862" viewBox="0 0 1700 862" fill="none" stroke="#000" stroke-linecap="butt">
<defs>
<linearGradient id="og" x1="0" y1="0" x2="1" y2="1"><stop offset="0" stop-color="#161616"/><stop offset="0.5" stop-color="#8a8a8a"/><stop offset="1" stop-color="#e8e8e8"/></linearGradient>
</defs>
<!-- floating toolbar -->
<path d="M1018 120.4V111.7H1003.2V135.6H1018V127.6" stroke-width="1.9"/>
<path d="M1029.9 125.6L1022 119.4V122.8C1014.5 123 1009.8 126.2 1008.4 132.2C1011.4 129 1015.6 127.8 1022 128V131.6Z" fill="#000" stroke="none"/>
<!-- pen auto-detect -->
<path d="M1004.9 170.4V166.5H1009.2M1004.9 180.3V184.5H1009.2M1019.6 184.5H1023.9V180.3" stroke-width="1.5"/>
<path d="M1008.3 180.6L1009.8 175.2L1020 166.4Q1021.4 165.4 1022.6 166.6L1024.2 168.6Q1025 169.9 1023.8 171L1013.4 179.5ZM1009.8 175.2L1013.4 179.5M1018.2 168L1022.2 172.4" stroke-width="1.2" stroke-linejoin="round"/>
<!-- border overlay -->
<path d="M1003.8 221H1026" stroke-width="1.9"/>
<path d="M1003.8 226.1H1026" stroke-width="1.6"/>
<path d="M1003.8 231.3H1026" stroke-width="1.2"/>
<path d="M1003.8 236.3H1026" stroke-width="1" stroke="#a2a2a2"/>
<!-- embed transparency -->
<path d="M1005 273.6V270.3H1008.6M1012.6 270.3H1016.6M1020.4 270.3H1024.1V273.6M1024.1 277.8V281.8M1024.1 285.8V289.3H1020.4M1016.6 289.3H1012.6M1008.6 289.3H1005V285.8M1005 281.8V277.8" stroke-width="1.6"/>
<path d="M1012.3 277.6L1010 279.8L1012.3 282M1016.9 277.6L1019.2 279.8L1016.9 282M1015.4 276.6L1013.8 283" stroke-width="1.25"/>
<!-- object gradients -->
<rect x="1003.8" y="321.8" width="20.2" height="20.2" rx="1.8" fill="url(#og)" stroke-width="1.5"/>
<!-- touchpad -->
<rect x="1004.3" y="374" width="20.4" height="20.2" rx="1.6" stroke-width="1.5"/>
<circle cx="1014.5" cy="384.4" r="2.1" fill="#000" stroke="none"/>
<path d="M1011.2 388.3A4.9 4.9 0 1 1 1017.8 388.3" stroke-width="1.2"/>
<!-- help -->
<circle cx="1423.8" cy="384.6" r="11.4" stroke-width="1.5"/>
<!-- dark mode -->
<clipPath id="dm"><circle cx="1014.8" cy="462.2" r="10.7"/></clipPath>
<circle cx="1025.3" cy="459.8" r="11.9" fill="#000" stroke="none" clip-path="url(#dm)"/>
<circle cx="1014.8" cy="462.2" r="10.7" stroke-width="1.9"/>
<!-- background color -->
<rect x="1002.6" y="527.1" width="23.8" height="16.2" rx="2.4" stroke-width="1.7"/>
<circle cx="1014.4" cy="535.2" r="5.4" stroke-width="0.6" stroke="#333"/>
<circle cx="1014.4" cy="535.2" r="3.4" stroke-width="0.5" stroke="#444"/>
<path d="M1014.4 529.8V531.8M1014.4 538.6V540.6M1009 535.2H1011M1017.8 535.2H1019.8M1010.6 531.4L1012 532.8M1016.8 537.6L1018.2 539M1018.2 531.4L1016.8 532.8M1012 537.6L1010.6 539" stroke-width="0.5" stroke="#444"/>
<!-- eyedropper -->
<path d="M1480.2 823.7L1481.6 819.4L1492.6 808.4L1495.6 811.4L1484.6 822.4Z" fill="#1a1a1a" stroke="#1a1a1a" stroke-width="1" stroke-linejoin="round"/>
<path d="M1484.4 819.6L1492.8 811.2" stroke="#fbfbfb" stroke-width="1.5" stroke-linecap="butt"/>
<path d="M1492.6 806L1498.4 811.8" stroke="#1a1a1a" stroke-width="3" stroke-linecap="round"/>
<path d="M1495.4 809L1498.6 805.8" stroke="#1a1a1a" stroke-width="4.4" stroke-linecap="butt"/>
<circle cx="1498.7" cy="805.9" r="3" fill="#1a1a1a" stroke="none"/>
<!-- cursor -->
<path d="M1487.6 283.6V298.4L1490.8 295.6L1493.2 300.4L1495.4 299.3L1493.2 294.8H1498.2Z" fill="#b4d334" stroke="#000" stroke-width="1.2" stroke-linejoin="miter"/>
</svg>
<div class="abs" style="left:1412.4px;top:373px;width:24px;height:24px;text-align:center;font-size:16px;line-height:24px;font-weight:bold;color:#000">?</div>
<!-- ICONS-END -->

<!-- swatches -->
<div class="sw" style="left:1038px;top:559px;width:80px;background:#e53a2f"></div>
<div class="sw" style="left:1118px;top:559px;width:79px;background:#ea9a3c"></div>
<div class="sw" style="left:1197px;top:559px;width:80px;background:#fbe25c"></div>
<div class="sw" style="left:1277px;top:559px;width:80px;background:#62c966"></div>
<div class="sw" style="left:1357px;top:559px;width:79px;background:#3d8f52"></div>
<div class="sw" style="left:1436px;top:559px;width:80px;background:#5bbaf7"></div>
<div class="sw" style="left:1038px;top:607px;width:80px;background:#3d8fd2"></div>
<div class="sw" style="left:1118px;top:607px;width:79px;background:#4a5fe2"></div>
<div class="sw" style="left:1197px;top:607px;width:80px;background:#9669e0"></div>
<div class="sw" style="left:1277px;top:607px;width:80px;background:#dc58b8"></div>
<div class="sw" style="left:1357px;top:607px;width:79px;background:#cfcfcf"></div>
<div class="sw" style="left:1436px;top:607px;width:80px;background:#fefefe;border:2px solid #000"></div>

<!-- hue bar -->
<div class="abs" style="left:1038px;top:662px;width:478px;height:24px;background:linear-gradient(90deg,#e8362e 0%,#ee6a34 4%,#f4a040 9%,#f6f84e 15.5%,#f4f84e 20%,#b0f444 27%,#78f048 33%,#70f290 40%,#70f2dc 45.5%,#6cecec 51.5%,#48a0f0 56%,#2a56ea 61%,#1212f0 65.5%,#2414ee 69.5%,#8424ea 76%,#e830e4 82.5%,#f034d0 88.5%,#f03888 93.5%,#e8362e 96.5%,#e8362e 100%)"></div>
<!-- sv box -->
<div class="abs" style="left:1038px;top:693px;width:478px;height:88.5px;background:linear-gradient(180deg,rgba(0,0,0,0) 0%,#000 100%),linear-gradient(90deg,#fff 0%,#e8362e 100%)"></div>
<!-- knobs -->
<div class="abs" style="left:1026px;top:662px;width:24px;height:24px;border-radius:50%;background:#e8322a;border:2px solid #fff;box-shadow:0 1px 3px rgba(0,0,0,.3)"></div>
<div class="abs" style="left:1026px;top:681px;width:24px;height:24px;border-radius:50%;background:#fefefe;box-shadow:0 1px 4px rgba(0,0,0,.35)"></div>

<!-- hex -->
<div class="abs" style="left:1046.5px;top:800px;font-size:24px;line-height:28px;color:#c9c9c9;font-weight:bold">#</div>
<div class="abs" id="hex" style="left:1066px;top:800px;font-size:25px;line-height:28px;color:#333;letter-spacing:0.75px">ffffff</div>

</div>
</body>
</html>
